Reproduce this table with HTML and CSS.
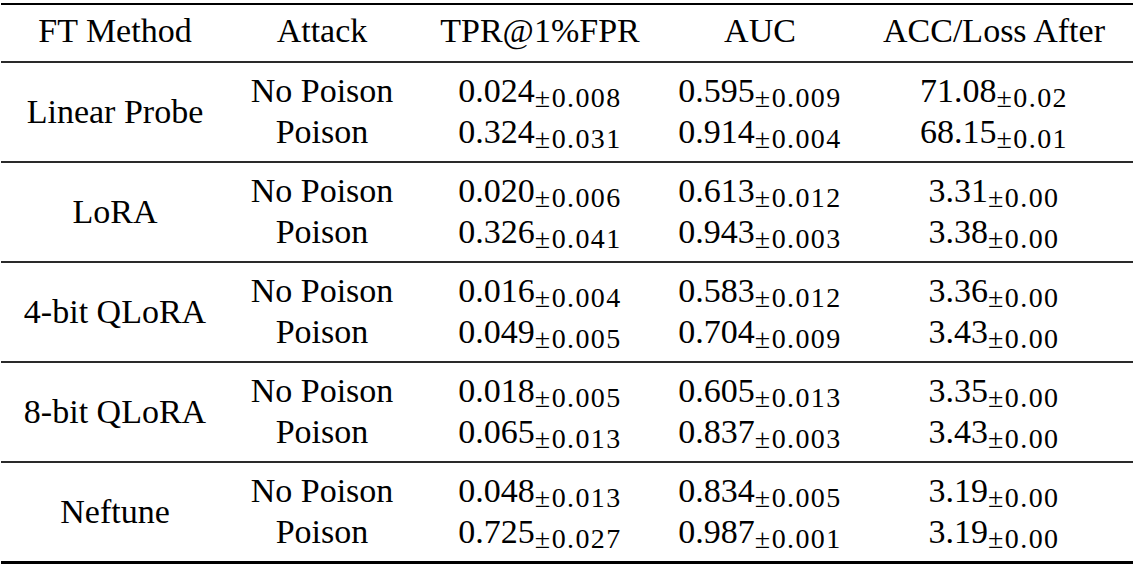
FILE: index.html
```html
<!DOCTYPE html>
<html>
<head>
<meta charset="utf-8">
<link rel="stylesheet" href="styles.css">
</head>
<body>
<table class="results">
  <colgroup>
    <col class="c1"><col class="c2"><col class="c3"><col class="c4"><col class="c5">
  </colgroup>
  <thead>
    <tr><th>FT Method</th><th>Attack</th><th>TPR@1%FPR</th><th>AUC</th><th>ACC/Loss After</th></tr>
  </thead>
  <tbody>
    <tr class="r1"><td rowspan="2" class="method">Linear Probe</td><td>No Poison</td><td>0.024<sub>±0.008</sub></td><td>0.595<sub>±0.009</sub></td><td>71.08<sub>±0.02</sub></td></tr>
    <tr class="r2"><td>Poison</td><td>0.324<sub>±0.031</sub></td><td>0.914<sub>±0.004</sub></td><td>68.15<sub>±0.01</sub></td></tr>
  </tbody>
  <tbody>
    <tr class="r1"><td rowspan="2" class="method">LoRA</td><td>No Poison</td><td>0.020<sub>±0.006</sub></td><td>0.613<sub>±0.012</sub></td><td>3.31<sub>±0.00</sub></td></tr>
    <tr class="r2"><td>Poison</td><td>0.326<sub>±0.041</sub></td><td>0.943<sub>±0.003</sub></td><td>3.38<sub>±0.00</sub></td></tr>
  </tbody>
  <tbody>
    <tr class="r1"><td rowspan="2" class="method">4-bit QLoRA</td><td>No Poison</td><td>0.016<sub>±0.004</sub></td><td>0.583<sub>±0.012</sub></td><td>3.36<sub>±0.00</sub></td></tr>
    <tr class="r2"><td>Poison</td><td>0.049<sub>±0.005</sub></td><td>0.704<sub>±0.009</sub></td><td>3.43<sub>±0.00</sub></td></tr>
  </tbody>
  <tbody>
    <tr class="r1"><td rowspan="2" class="method">8-bit QLoRA</td><td>No Poison</td><td>0.018<sub>±0.005</sub></td><td>0.605<sub>±0.013</sub></td><td>3.35<sub>±0.00</sub></td></tr>
    <tr class="r2"><td>Poison</td><td>0.065<sub>±0.013</sub></td><td>0.837<sub>±0.003</sub></td><td>3.43<sub>±0.00</sub></td></tr>
  </tbody>
  <tbody>
    <tr class="r1"><td rowspan="2" class="method">Neftune</td><td>No Poison</td><td>0.048<sub>±0.013</sub></td><td>0.834<sub>±0.005</sub></td><td>3.19<sub>±0.00</sub></td></tr>
    <tr class="r2"><td>Poison</td><td>0.725<sub>±0.027</sub></td><td>0.987<sub>±0.001</sub></td><td>3.19<sub>±0.00</sub></td></tr>
  </tbody>
</table>
</body>
</html>
```
FILE: styles.css
```css
html, body {
  margin: 0;
  padding: 0;
  background: #fff;
}

.results {
  margin: 3px 0 0 1px;
  width: 1132px;
  table-layout: fixed;
  border-collapse: separate;
  border-spacing: 0;
  border-top: 2px solid #000;
  border-bottom: 3px solid #000;
  font-family: "Liberation Serif", "Times New Roman", serif;
  font-size: 34px;
  line-height: 41px;
  color: #000;
}

.c1 { width: 228px; }
.c2 { width: 186px; }
.c3 { width: 250px; }
.c4 { width: 190px; }
.c5 { width: 278px; }

.results th,
.results td {
  padding: 0;
  text-align: center;
  white-space: nowrap;
  font-weight: normal;
}

.results th {
  padding: 5px 0 10px;
}

.r1 td {
  border-top: 2px solid #2a2a2a;
  padding-top: 7px;
}

.r2 td {
  padding-bottom: 9px;
}

.results td.method {
  vertical-align: middle;
  padding-top: 7px;
  padding-bottom: 9px;
}

.results sub {
  font-size: 28px;
  line-height: 0;
  letter-spacing: 1.4px;
  vertical-align: -5px;
}
```
